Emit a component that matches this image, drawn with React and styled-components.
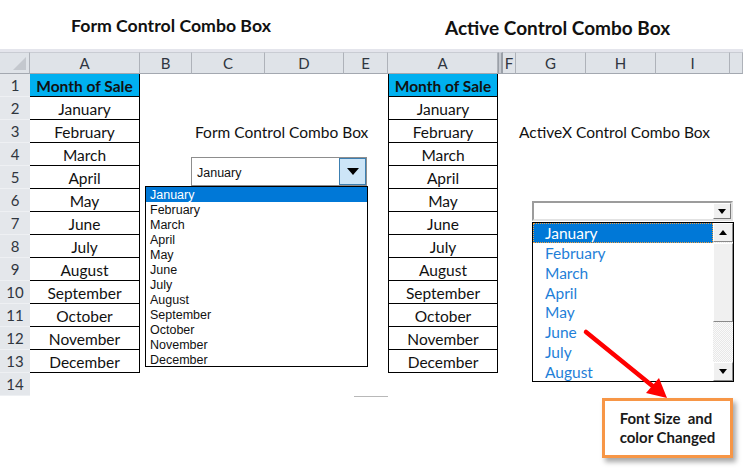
import React from "react";
import styled, { createGlobalStyle } from "styled-components";

const months = [
  "January", "February", "March", "April", "May", "June",
  "July", "August", "September", "October", "November", "December",
];

const GlobalStyle = createGlobalStyle`
  html, body { margin: 0; padding: 0; background: #fff; }
  body { font-family: Lato, "Liberation Sans", sans-serif; }
`;

const Page = styled.div`
  position: relative;
  width: 743px;
  height: 470px;
  overflow: hidden;
  background: #fff;
`;

const TitleBar = styled.div`
  height: 49px;
  display: grid;
  grid-template-columns: 374px 1fr;
  padding-left: 71px;
  box-sizing: border-box;
`;

const Title = styled.div`
  font-size: ${(p) => p.$size}px;
  font-weight: 700;
  color: #111;
  padding-top: ${(p) => p.$top}px;
  white-space: nowrap;
`;

const Strip = styled.div`
  height: 3px;
  background: #e4e5ec;
`;

const Sheets = styled.div`
  display: flex;
`;

const Sheet = styled.div`
  display: grid;
  grid-template-columns: ${(p) => p.$cols};
  grid-template-rows: 22px repeat(14, 23px);
`;

const HeadCell = styled.div`
  box-sizing: border-box;
  background: #dfe3e8;
  border-right: 1px solid #aeb2b9;
  border-bottom: 1px solid #a3a8b0;
  border-top: 1px solid #c9ccd3;
  display: flex;
  align-items: center;
  justify-content: center;
  font-size: 15px;
  color: #2f3640;
  ${(p) => p.$split && `background: #c6cad1; border-right: 2px solid #9aa0a8; border-left: 1px solid #9aa0a8;`}
`;

const Corner = styled(HeadCell)`
  position: relative;
  overflow: hidden;
  &::after {
    content: "";
    position: absolute;
    right: 3px;
    bottom: 3px;
    border-style: solid;
    border-width: 0 0 13px 13px;
    border-color: transparent transparent #c4c8ce transparent;
  }
`;

const RowNum = styled.div`
  box-sizing: border-box;
  background: #e4e7eb;
  border-bottom: 1px solid #eef0f3;
  display: flex;
  align-items: center;
  justify-content: center;
  font-size: 15px;
  color: #30363e;
`;

const Cell = styled.div`
  box-sizing: border-box;
  display: flex;
  align-items: center;
  justify-content: ${(p) => (p.$boxed ? "center" : "flex-start")};
  padding-left: ${(p) => (p.$boxed ? 0 : 3)}px;
  padding-top: 1px;
  font-size: 15.5px;
  color: #111;
  white-space: nowrap;
  overflow: visible;
  position: relative;
  z-index: ${(p) => (p.$label ? 1 : 0)};
  ${(p) =>
    p.$boxed &&
    `border-right: 1px solid #000; border-bottom: 1px solid #000;`}
  ${(p) => p.$leftLine && `border-left: 1px solid #000;`}
  ${(p) => p.$head && `background: #00b0f0; font-weight: 700;`}
  ${(p) =>
    p.$edge &&
    `&::after { content: ""; position: absolute; left: 10px; right: 0; bottom: -1px; border-bottom: 1px solid #b8b8b8; }`}
`;

/* ---- Form control combo ---- */
const FormCombo = styled.div`
  position: absolute;
  left: 191px;
  top: 157px;
  width: 176px;
  height: 29px;
  box-sizing: border-box;
  border: 1px solid #8d8d8d;
  background: #fff;
  display: flex;
  z-index: 3;
`;

const FormValue = styled.div`
  flex: 1;
  display: flex;
  align-items: center;
  padding-left: 5px;
  padding-top: 2px;
  font-family: "Liberation Sans", Arial, sans-serif;
  font-size: 12.5px;
  color: #111;
`;

const FormButton = styled.div`
  width: 27px;
  box-sizing: border-box;
  background: #cde5f7;
  border: 1px solid #3c7fb1;
  display: flex;
  align-items: center;
  justify-content: center;
`;

const Tri = styled.div`
  width: 0;
  height: 0;
  border-left: ${(p) => p.$w / 2}px solid transparent;
  border-right: ${(p) => p.$w / 2}px solid transparent;
  ${(p) => (p.$up ? "border-bottom" : "border-top")}: ${(p) => p.$h}px solid #000;
`;

const FormList = styled.div`
  position: absolute;
  left: 145px;
  top: 186px;
  width: 223px;
  height: 181px;
  box-sizing: border-box;
  border: 1px solid #000;
  background: #fff;
  z-index: 3;
  font-family: "Liberation Sans", Arial, sans-serif;
  font-size: 12.5px;
`;

const FormItem = styled.div`
  height: 15px;
  line-height: 17px;
  padding-left: 4px;
  color: ${(p) => (p.$sel ? "#fff" : "#111")};
  background: ${(p) => (p.$sel ? "#0078d7" : "transparent")};
`;

/* ---- ActiveX combo ---- */
const AxCombo = styled.div`
  position: absolute;
  left: 532px;
  top: 201px;
  width: 201px;
  height: 20px;
  box-sizing: border-box;
  border: 2px solid;
  border-color: #9c9c9c #e2e2e2 #e2e2e2 #9c9c9c;
  background: #fff;
  display: flex;
  justify-content: flex-end;
  z-index: 3;
`;

const AxButton = styled.div`
  width: 18px;
  box-sizing: border-box;
  background: #f0f0f0;
  border: 1px solid;
  border-color: #fff #7a7a7a #7a7a7a #fff;
  display: flex;
  align-items: center;
  justify-content: center;
`;

const AxList = styled.div`
  position: absolute;
  left: 532px;
  top: 222px;
  width: 202px;
  height: 160px;
  box-sizing: border-box;
  border: 1px solid #000;
  background: #fff;
  display: flex;
  z-index: 3;
`;

const AxItems = styled.div`
  flex: 1;
`;

const AxItem = styled.div`
  box-sizing: border-box;
  height: ${(p) => (p.$sel ? 20 : 19.8)}px;
  line-height: 19px;
  padding-left: 11px;
  font-size: 15.5px;
  color: ${(p) => (p.$sel ? "#fff" : "#1f7fd8")};
  background: ${(p) => (p.$sel ? "#0078d7" : "transparent")};
  border: 1px dotted ${(p) => (p.$sel ? "#f0a040" : "transparent")};
`;

const Scrollbar = styled.div`
  width: 20px;
  display: flex;
  flex-direction: column;
  background-color: #f4f4f4;
  background-image: repeating-conic-gradient(#e8e8e8 0 25%, #fafafa 0 50%);
  background-size: 2px 2px;
`;

const ScrollBtn = styled.div`
  height: ${(p) => p.$h}px;
  box-sizing: border-box;
  background: #f0f0f0;
  border: 1px solid;
  border-color: #fff #8a8a8a #8a8a8a #fff;
  display: flex;
  align-items: center;
  justify-content: center;
  margin-bottom: ${(p) => p.$mb || 0}px;
`;

const Spacer = styled.div`
  flex: 1;
`;

const Arrow = styled.svg`
  position: absolute;
  left: 0;
  top: 0;
  z-index: 4;
  pointer-events: none;
`;

const Callout = styled.div`
  position: absolute;
  left: 602px;
  top: 398px;
  width: 131px;
  height: 60px;
  box-sizing: border-box;
  border: 3px solid #f79646;
  background: #fff;
  box-shadow: 3px 4px 5px rgba(0, 0, 0, 0.35);
  display: flex;
  flex-direction: column;
  align-items: center;
  justify-content: center;
  font-size: 15px;
  font-weight: 700;
  line-height: 19px;
  color: #1a1a1a;
  white-space: pre;
  z-index: 4;
`;

const leftCols = ["A", "B", "C", "D", "E"];

function LeftSheet() {
  return (
    <Sheet $cols="30px 110px 52px 73px 79px 44px">
      <Corner />
      {leftCols.map((c) => (
        <HeadCell key={c}>{c}</HeadCell>
      ))}
      {Array.from({ length: 14 }, (_, r) => (
        <React.Fragment key={r}>
          <RowNum>{r + 1}</RowNum>
          {r < 13 ? (
            <Cell $boxed $head={r === 0}>
              {r === 0 ? "Month of Sale" : months[r - 1]}
            </Cell>
          ) : (
            <Cell />
          )}
          <Cell />
          <Cell $label>{r === 2 ? "Form Control Combo Box" : ""}</Cell>
          <Cell />
          <Cell $edge={r === 13} />
        </React.Fragment>
      ))}
    </Sheet>
  );
}

function RightSheet() {
  return (
    <Sheet $cols="110px 5px 13px 70px 70px 74px 13px">
      <HeadCell>A</HeadCell>
      <HeadCell $split />
      <HeadCell>F</HeadCell>
      <HeadCell>G</HeadCell>
      <HeadCell>H</HeadCell>
      <HeadCell>I</HeadCell>
      <HeadCell />
      {Array.from({ length: 14 }, (_, r) => (
        <React.Fragment key={r}>
          {r < 13 ? (
            <Cell $boxed $leftLine $head={r === 0}>
              {r === 0 ? "Month of Sale" : months[r - 1]}
            </Cell>
          ) : (
            <Cell />
          )}
          <Cell />
          <Cell />
          <Cell $label>{r === 2 ? "ActiveX Control Combo Box" : ""}</Cell>
          <Cell />
          <Cell />
          <Cell />
        </React.Fragment>
      ))}
    </Sheet>
  );
}

export default function App() {
  return (
    <Page>
      <GlobalStyle />
      <TitleBar>
        <Title $top={15} $size={17.7}>Form Control Combo Box</Title>
        <Title $top={16} $size={19}>Active Control Combo Box</Title>
      </TitleBar>
      <Strip />
      <Sheets>
        <LeftSheet />
        <RightSheet />
      </Sheets>

      <FormCombo>
        <FormValue>January</FormValue>
        <FormButton>
          <Tri $w={12} $h={7} />
        </FormButton>
      </FormCombo>
      <FormList>
        {months.map((m, i) => (
          <FormItem key={m} $sel={i === 0}>
            {m}
          </FormItem>
        ))}
      </FormList>

      <AxCombo>
        <AxButton>
          <Tri $w={9} $h={5} />
        </AxButton>
      </AxCombo>
      <AxList>
        <AxItems>
          {months.slice(0, 8).map((m, i) => (
            <AxItem key={m} $sel={i === 0}>
              {m}
            </AxItem>
          ))}
        </AxItems>
        <Scrollbar>
          <ScrollBtn $h={19} $mb={1}>
            <Tri $w={9} $h={5} $up />
          </ScrollBtn>
          <ScrollBtn $h={79} />
          <Spacer />
          <ScrollBtn $h={19}>
            <Tri $w={9} $h={5} />
          </ScrollBtn>
        </Scrollbar>
      </AxList>

      <Arrow width="743" height="470" viewBox="0 0 743 470">
        <line x1="586" y1="332" x2="655" y2="388" stroke="#ff0000" strokeWidth="4.5" strokeLinecap="round" />
        <polygon points="667,398 646,393 659,378" fill="#ff0000" />
      </Arrow>

      <Callout>{"Font Size  and\ncolor Changed"}</Callout>
    </Page>
  );
}
